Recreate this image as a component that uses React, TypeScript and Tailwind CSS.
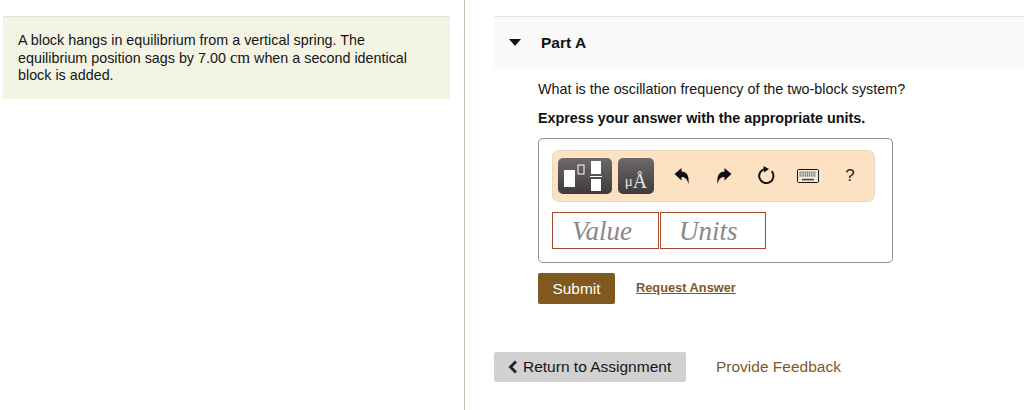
import React from "react";

const sans = "font-['Liberation_Sans',Arial,sans-serif]";

function Templates() {
  return (
    <svg width="44" height="30" viewBox="0 0 44 30" aria-hidden="true">
      <rect x="1" y="9" width="11" height="17" fill="#fff" />
      <rect x="15" y="4" width="6" height="9" fill="none" stroke="#fff" strokeWidth="1" />
      <rect x="28" y="0" width="10" height="13" fill="#fff" />
      <rect x="27" y="15" width="12" height="1" fill="#fff" />
      <rect x="28" y="18" width="10" height="12" fill="#fff" />
    </svg>
  );
}

function Undo({ flip }: { flip?: boolean }) {
  return (
    <svg width="16" height="18" viewBox="0 0 16 18" aria-hidden="true" className={flip ? "-scale-x-100" : ""}>
      <path d="M0.5 7 L7.5 1 V4.6 C12.5 4.6 15.5 8.5 14.5 17 C13.4 12.5 11.4 10 7.5 10 V13.4 Z" fill="#111" />
    </svg>
  );
}

function Redo() {
  return (
    <svg width="20" height="20" viewBox="0 0 20 20" aria-hidden="true">
      <path d="M15.6 5.2 A7.1 7.1 0 1 1 9.5 2.9" fill="none" stroke="#111" strokeWidth="2" />
      <path d="M7.5 0 L13 3 L8 6.6 Z" fill="#111" />
    </svg>
  );
}

function Keyboard() {
  const keys = [];
  for (let r = 0; r < 3; r++) {
    for (let c = 0; c < 9; c++) {
      keys.push(<rect key={`${r}-${c}`} x={2.5 + c * 1.85} y={2.5 + r * 1.9} width="1.2" height="1.2" fill="#555" />);
    }
  }
  return (
    <svg width="22" height="14" viewBox="0 0 22 14" aria-hidden="true">
      <rect x="0.5" y="0.5" width="21" height="13" rx="1" fill="#f3ecdf" stroke="#111" />
      {keys}
      <rect x="5" y="9.8" width="12" height="1.6" fill="#444" />
    </svg>
  );
}

function Tool({ className, children }: { className: string; children: React.ReactNode }) {
  return <div className={`flex items-center justify-center ${className}`}>{children}</div>;
}

export default function App() {
  return (
    <div className={`flex h-[410px] w-[1024px] overflow-hidden bg-white text-[14.33px] text-[#151515] ${sans}`}>
      <div className="h-full w-[465px] shrink-0 border-r border-[#c9c3b6] pt-4 pl-[3px]">
        <div className="h-[83px] w-[447px] border-t border-[#e2e2dc] bg-[#f4f4e4] pt-[15px] pl-[15px] leading-[17.7px]">
          <p className="w-[410px]">
            A block hangs in equilibrium from a vertical spring. The equilibrium position sags by 7.00{" "}
            <span className="font-['Liberation_Serif',serif] text-[16.5px] leading-none">cm</span> when a second identical block is added.
          </p>
        </div>
      </div>

      <div className="flex-1 pt-4 pl-[29px]">
        <div className="flex h-[52px] items-center border-t border-[#e4e4e4] bg-[#f9f9f9] pl-[15px]">
          <svg width="12" height="7" viewBox="0 0 12 7" aria-hidden="true">
            <path d="M0 0 H12 L6 7 Z" fill="#111" />
          </svg>
          <span className="ml-[20px] text-[15.5px] font-bold text-[#111]">Part A</span>
        </div>

        <div className="pl-[44px]">
          <p className="mt-[12px] leading-[18px]">What is the oscillation frequency of the two-block system?</p>
          <p className="mt-[11px] font-bold leading-[18px] text-[#111]">Express your answer with the appropriate units.</p>

          <div className="mt-[11px] h-[125px] w-[355px] rounded-[5px] border border-[#8f8f8f] pt-[11px] pl-[13px]">
            <div className="flex h-[52px] w-[323px] items-center rounded-[7px] border border-[#e8d8bf] bg-[#fde1c3] pl-[5px]">
              <Tool className="h-[36px] w-[54px] rounded-[5px] bg-gradient-to-b from-[#6e6a69] to-[#3f3b3a]">
                <Templates />
              </Tool>
              <Tool className="ml-[6px] h-[36px] w-[36px] items-end rounded-[5px] bg-gradient-to-b from-[#6e6a69] to-[#3f3b3a] pb-[3px] font-['Liberation_Serif',serif] text-[#e6e6e6]">
                <span className="text-[15px] leading-[20px]">μ</span>
                <span className="text-[20px] leading-[20px]">Å</span>
              </Tool>
              <Tool className="ml-[20px] w-[16px]">
                <Undo />
              </Tool>
              <Tool className="ml-[26px] w-[16px]">
                <Undo flip />
              </Tool>
              <Tool className="ml-[24px] w-[20px]">
                <Redo />
              </Tool>
              <Tool className="ml-[21px] w-[22px]">
                <Keyboard />
              </Tool>
              <Tool className="ml-[26px] w-[10px] text-[17px] text-[#222]">?</Tool>
            </div>
            <div className="mt-[10px] flex gap-px font-['Liberation_Serif',serif] text-[27px] italic text-[#888]">
              <div className="flex h-[37px] w-[107px] items-center border border-[#a8482a] pt-[2px] pl-[19px]">Value</div>
              <div className="flex h-[37px] w-[106px] items-center border border-[#a8482a] pt-[2px] pl-[18px]">Units</div>
            </div>
          </div>

          <div className="mt-[10px] flex items-start">
            <div className="flex h-[31px] w-[77px] items-center justify-center rounded-[2px] bg-[#80591f] text-[15.4px] text-white">
              Submit
            </div>
            <span className="ml-[21px] mt-[7px] text-[12.8px] font-bold leading-[16px] text-[#80591f] underline">Request Answer</span>
          </div>
        </div>

        <div className="mt-[48px] flex items-center">
          <div className="flex h-[30px] w-[192px] items-center rounded-[2px] bg-[#d1d1d1] pl-[14px]">
            <svg width="10" height="14" viewBox="0 0 10 14" aria-hidden="true">
              <path d="M8 1.5 L2.5 7 L8 12.5" fill="none" stroke="#222" strokeWidth="2.8" />
            </svg>
            <span className="ml-[5px] text-[15.5px]">Return to Assignment</span>
          </div>
          <span className="ml-[30px] text-[15.5px] text-[#80591f]">Provide Feedback</span>
        </div>
      </div>
    </div>
  );
}
